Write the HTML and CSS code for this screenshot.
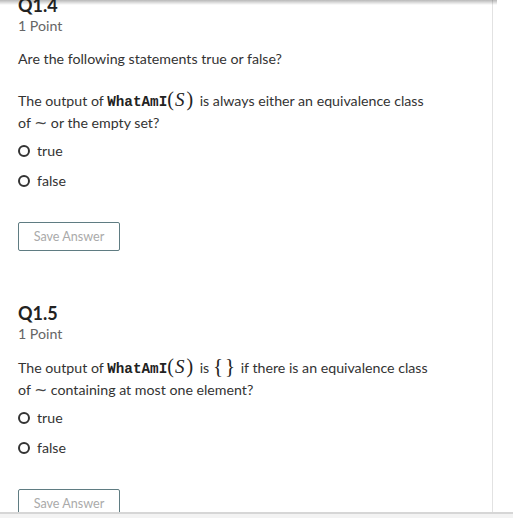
FILE: index.html
```html
<!DOCTYPE html>
<html>
<head>
<meta charset="utf-8">
<link rel="stylesheet" href="styles.css">
</head>
<body>
<div class="topshadow"></div>
<div class="page">
  <main class="content">
    <section class="question q1">
      <h2 class="qtitle">Q1.4</h2>
      <div class="points">1 Point</div>
      <p class="prompt">Are the following statements true or false?</p>
      <p class="stmt">The output of <span class="math"><span class="tt">WhatAmI</span><span class="paren">(</span><span class="mi">S</span><span class="paren">)</span></span> is always either an equivalence class of <span class="sim">∼</span> or the empty set?</p>
      <div class="options">
        <label class="opt"><span class="radio"></span>true</label>
        <label class="opt"><span class="radio"></span>false</label>
      </div>
      <button class="save">Save Answer</button>
    </section>
    <section class="question q2">
      <h2 class="qtitle">Q1.5</h2>
      <div class="points">1 Point</div>
      <p class="stmt">The output of <span class="math"><span class="tt">WhatAmI</span><span class="paren">(</span><span class="mi">S</span><span class="paren">)</span></span> is <span class="brace">{}</span> if there is an equivalence class of <span class="sim">∼</span> containing at most one element?</p>
      <div class="options">
        <label class="opt"><span class="radio"></span>true</label>
        <label class="opt"><span class="radio"></span>false</label>
      </div>
      <button class="save">Save Answer</button>
    </section>
  </main>
</div>
<div class="bottombar"></div>
</body>
</html>
```
FILE: styles.css
```css
html, body {
  margin: 0;
  padding: 0;
  background: #fff;
  overflow: hidden;
}
body {
  font-family: Lato, "Open Sans", sans-serif;
  color: #333;
  width: 513px;
  height: 518px;
  position: relative;
}
.topshadow {
  position: absolute;
  left: 0;
  top: 0;
  width: 497px;
  height: 5px;
  background: linear-gradient(rgba(0,0,0,0.28), rgba(0,0,0,0));
  z-index: 0;
}
.page {
  width: 493px;
  height: 518px;
  border-right: 1px solid #e2e2e2;
  box-sizing: border-box;
  overflow: hidden;
}
.content {
  position: relative;
  z-index: 1;
  width: 420px;
  padding: 0 18px;
  margin-top: -7px;
}
.qtitle {
  margin: 0;
  font-size: 18px;
  font-weight: 700;
  line-height: 24px;
  color: #222;
}
.points {
  font-size: 14.2px;
  color: #666;
  line-height: 18px;
}
.prompt {
  margin: 13px 0 0;
  font-size: 14.2px;
  line-height: 22px;
}
.stmt {
  margin: 20px 0 0;
  font-size: 14.2px;
  line-height: 22px;
}
.q2 .stmt {
  margin-top: 14px;
}
.math {
  margin-right: 3px;
  line-height: 0;
}
.tt {
  font-family: "Liberation Mono", "DejaVu Sans Mono", monospace;
  font-weight: 700;
  font-size: 14.3px;
  color: #222;
}
.paren {
  font-family: "Liberation Serif", "DejaVu Serif", serif;
  font-size: 20px;
  color: #222;
}
.brace {
  font-family: "Liberation Serif", "DejaVu Serif", serif;
  font-size: 21px;
  letter-spacing: 2px;
  color: #222;
  line-height: 0;
}
.mi {
  font-family: "Liberation Serif", "DejaVu Serif", serif;
  font-style: italic;
  font-size: 19px;
  color: #222;
  margin: 0 2px 0 1px;
}
.sim {
  font-family: "DejaVu Sans", sans-serif;
  font-size: 15.5px;
  color: #444;
  line-height: 0;
}
.options {
  display: flex;
  flex-direction: column;
  gap: 10px;
  margin-top: 7px;
}
.opt {
  display: flex;
  align-items: center;
  font-size: 14.2px;
  line-height: 20px;
  gap: 6px;
}
.radio {
  width: 8px;
  height: 8px;
  border: 2px solid #333;
  border-radius: 50%;
  display: inline-block;
  margin-right: 1px;
}
.save {
  display: block;
  margin-top: 31px;
  width: 102px;
  height: 29px;
  background: #fff;
  border: 1px solid #5f7c82;
  border-radius: 2px;
  color: #aaa;
  font-family: Lato, "Open Sans", sans-serif;
  font-size: 12.6px;
  padding: 0;
}
.q2 {
  margin-top: 50px;
}
.bottombar {
  position: absolute;
  left: 0;
  bottom: 0;
  width: 513px;
  height: 6px;
  border-top: 2px solid #d6d6d6;
  background: #f3f3f3;
  box-sizing: border-box;
  z-index: 2;
}
```
